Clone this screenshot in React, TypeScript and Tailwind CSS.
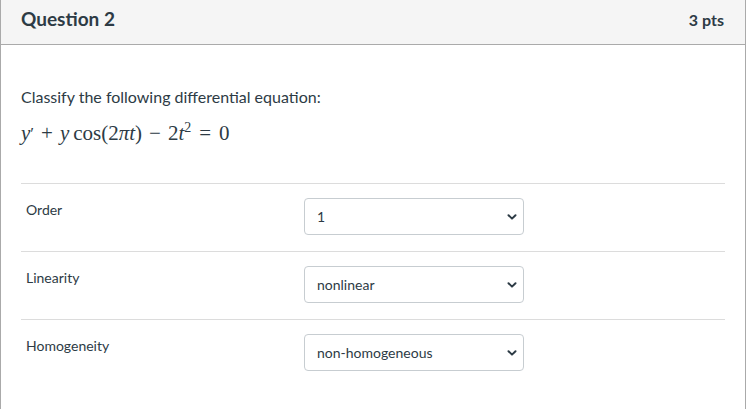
import React from "react";

function Chevron() {
  return (
    <svg width="10" height="10" viewBox="0 0 10 10" className="text-[#2d3b45]">
      <path d="M1.5 3.2 L5 6.6 L8.5 3.2" fill="none" stroke="currentColor" strokeWidth="2" strokeLinecap="round" strokeLinejoin="round" />
    </svg>
  );
}

function Row({ label, value, last }: { label: string; value: string; last?: boolean }) {
  return (
    <div className={`flex pl-[5px] pt-[14px] ${last ? "pb-[36px]" : "pb-[16px] border-b border-[#dcdcdc]"}`}>
      <div className="w-[278px] pt-[2px] text-[14px] leading-[20px]">{label}</div>
      <div className="w-[220px] h-[37px] border border-[#c7cdd1] rounded-[4px] flex items-center justify-between pl-[12px] pr-[6px] bg-white">
        <span className="text-[14px]">{value}</span>
        <Chevron />
      </div>
    </div>
  );
}

export default function App() {
  return (
    <div className="w-[746px] h-[409px] bg-white text-[#2d3b45] font-['Lato',sans-serif] border-l border-r border-[#aaaaaa]">
      <div className="h-[45px] bg-[#f5f5f5] border-b border-[#aaaaaa] flex items-center justify-between pl-[20px] pr-[21px] pb-[5px]">
        <span className="text-[19px] font-bold">Question 2</span>
        <span className="text-[16px] font-bold">3 pts</span>
      </div>
      <div className="pl-[20px] pr-[20px] pt-[40px]">
        <div className="text-[16px] leading-[24px]">Classify the following differential equation:</div>
        <div className="mt-[12px] pb-[35px] border-b border-[#dcdcdc] text-[21px] leading-[24px] font-['Liberation_Serif',serif] whitespace-nowrap">
          <span className="italic">y</span>
          <span className="relative top-[-1px] text-[17px]">′</span>
          <span className="mx-[7px]">+</span>
          <span className="italic">y</span>
          <span className="ml-[4px]">cos</span>
          <span>(2</span>
          <span className="italic">πt</span>
          <span>)</span>
          <span className="mx-[7px]">−</span>
          <span>2</span>
          <span className="italic">t</span>
          <span className="relative top-[-8px] text-[14px]">2</span>
          <span className="mx-[8px]">=</span>
          <span>0</span>
        </div>
        <Row label="Order" value="1" />
        <Row label="Linearity" value="nonlinear" />
        <Row label="Homogeneity" value="non-homogeneous" last />
      </div>
    </div>
  );
}
